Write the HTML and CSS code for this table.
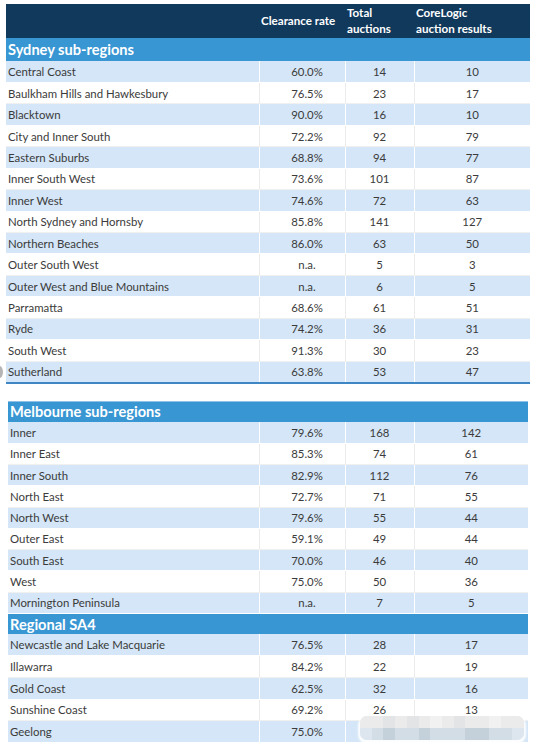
FILE: index.html
```html
<!DOCTYPE html>
<html lang="en">

<head>
    <meta charset="UTF-8">
    <meta name="viewport" content="width=device-width, initial-scale=1.0">
    <title>Auction results by region</title>
    <link rel="stylesheet" href="styles.css">
</head>

<body>
    <div class="page">
        <!-- Sydney table -->
        <table class="results sydney">
            <colgroup>
                <col class="c-region">
                <col class="c-rate">
                <col class="c-total">
                <col class="c-core">
            </colgroup>
            <tr class="head">
                <th></th>
                <th>Clearance rate</th>
                <th>Total<br>auctions</th>
                <th>CoreLogic<br>auction results</th>
            </tr>
            <tr class="section"><td colspan="4">Sydney sub-regions</td></tr>
            <tr><td>Central Coast</td><td>60.0%</td><td>14</td><td>10</td></tr>
            <tr><td>Baulkham Hills and Hawkesbury</td><td>76.5%</td><td>23</td><td>17</td></tr>
            <tr><td>Blacktown</td><td>90.0%</td><td>16</td><td>10</td></tr>
            <tr><td>City and Inner South</td><td>72.2%</td><td>92</td><td>79</td></tr>
            <tr><td>Eastern Suburbs</td><td>68.8%</td><td>94</td><td>77</td></tr>
            <tr><td>Inner South West</td><td>73.6%</td><td>101</td><td>87</td></tr>
            <tr><td>Inner West</td><td>74.6%</td><td>72</td><td>63</td></tr>
            <tr><td>North Sydney and Hornsby</td><td>85.8%</td><td>141</td><td>127</td></tr>
            <tr><td>Northern Beaches</td><td>86.0%</td><td>63</td><td>50</td></tr>
            <tr><td>Outer South West</td><td>n.a.</td><td>5</td><td>3</td></tr>
            <tr><td>Outer West and Blue Mountains</td><td>n.a.</td><td>6</td><td>5</td></tr>
            <tr><td>Parramatta</td><td>68.6%</td><td>61</td><td>51</td></tr>
            <tr><td>Ryde</td><td>74.2%</td><td>36</td><td>31</td></tr>
            <tr><td>South West</td><td>91.3%</td><td>30</td><td>23</td></tr>
            <tr><td>Sutherland</td><td>63.8%</td><td>53</td><td>47</td></tr>
        </table>

        <!-- Melbourne + regional table -->
        <table class="results melbourne">
            <colgroup>
                <col class="c-region">
                <col class="c-rate">
                <col class="c-total">
                <col class="c-core">
            </colgroup>
            <tr class="section"><td colspan="4">Melbourne sub-regions</td></tr>
            <tr class="tint"><td>Inner</td><td>79.6%</td><td>168</td><td>142</td></tr>
            <tr class="plain"><td>Inner East</td><td>85.3%</td><td>74</td><td>61</td></tr>
            <tr class="tint"><td>Inner South</td><td>82.9%</td><td>112</td><td>76</td></tr>
            <tr class="plain"><td>North East</td><td>72.7%</td><td>71</td><td>55</td></tr>
            <tr class="tint"><td>North West</td><td>79.6%</td><td>55</td><td>44</td></tr>
            <tr class="plain"><td>Outer East</td><td>59.1%</td><td>49</td><td>44</td></tr>
            <tr class="tint"><td>South East</td><td>70.0%</td><td>46</td><td>40</td></tr>
            <tr class="plain"><td>West</td><td>75.0%</td><td>50</td><td>36</td></tr>
            <tr class="tint"><td>Mornington Peninsula</td><td>n.a.</td><td>7</td><td>5</td></tr>
            <tr class="section sub"><td colspan="4">Regional SA4</td></tr>
            <tr class="tint regional"><td>Newcastle and Lake Macquarie</td><td>76.5%</td><td>28</td><td>17</td></tr>
            <tr class="plain regional"><td>Illawarra</td><td>84.2%</td><td>22</td><td>19</td></tr>
            <tr class="tint regional"><td>Gold Coast</td><td>62.5%</td><td>32</td><td>16</td></tr>
            <tr class="plain regional"><td>Sunshine Coast</td><td>69.2%</td><td>26</td><td>13</td></tr>
            <tr class="tint regional"><td>Geelong</td><td>75.0%</td><td></td><td></td></tr>
        </table>

        <!-- blurred watermark over the last row -->
        <div class="mosaic">
            <span></span><span></span><span></span><span></span><span></span><span></span><span></span>
            <span></span><span></span><span></span><span></span><span></span><span></span><span></span>
            <span></span><span></span><span></span><span></span><span></span><span></span><span></span>
            <span></span><span></span><span></span><span></span><span></span><span></span><span></span>
        </div>
        <span class="edge-dot"></span>
    </div>
</body>

</html>
```

FILE: styles.css
```css
body {
    margin: 0;
    padding: 0;
    background-color: #fff;
    font-family: Lato, "Liberation Sans", sans-serif;
    color: #3b3b3b;
}

.page {
    position: relative;
    width: 536px;
    height: 748px;
    padding-top: 4px;
    box-sizing: border-box;
}

.results {
    border-collapse: collapse;
    table-layout: fixed;
    font-size: 11.4px;
}

.sydney {
    width: 524px;
    margin-left: 6px;
}

.melbourne {
    width: 520px;
    margin-left: 8px;
    margin-top: 17px;
    border-top: 1px solid #8fc0e6;
}

.sydney .c-region { width: 253px; }
.melbourne .c-region { width: 251px; }
.c-rate { width: 86px; }
.c-total { width: 69px; }

.results td {
    height: 21.45px;
    padding: 0 2px;
    text-align: center;
    border-right: 1px solid #fff;
    border-bottom: 1px solid #fff;
    box-sizing: border-box;
}

.results td:first-child {
    text-align: left;
}

.results td:nth-child(2) {
    padding-left: 12px;
}

.results td:last-child {
    border-right: none;
}

/* sydney stripes: heading rows take the first two slots */
.sydney tr:nth-child(odd) td { background-color: #d4e6f7; }
.sydney tr:nth-child(even) td {
    background-color: #fff;
    border-right-color: #ebebeb;
    border-bottom-color: #f0f0f0;
}

.melbourne tr.tint td { background-color: #d4e6f7; }
.melbourne tr.plain td {
    background-color: #fff;
    border-right-color: #ebebeb;
    border-bottom-color: #f0f0f0;
}

.melbourne tr.tint td,
.melbourne tr.plain td {
    height: 21.25px;
}

.melbourne tr.regional td {
    height: 21.6px;
}

.sydney tr:last-child td {
    border-bottom: 2px solid #3f86c4;
}

.results tr.head th {
    height: 34px;
    padding: 0 2px;
    background-color: #11395c;
    color: #fff;
    font-size: 11.6px;
    font-weight: bold;
    text-align: left;
    line-height: 16px;
}

.results tr.section td {
    height: 23px;
    background-color: #3896d3;
    color: #fff;
    font-size: 14.6px;
    font-weight: bold;
    text-align: left;
    border: none;
    padding-left: 2px;
}

.melbourne tr.section td {
    height: 21px;
}

.mosaic {
    position: absolute;
    left: 360px;
    top: 716px;
    width: 164px;
    height: 24px;
    display: grid;
    grid-template-columns: repeat(14, 1fr);
    border-radius: 7px;
    overflow: hidden;
    box-shadow: 0 2px 2px 2px rgba(255, 255, 255, 0.9);
    background-color: #e4e8ec;
}

.mosaic span:nth-child(-n+14) { background-color: #ebebeb; }
.mosaic span:nth-child(3),
.mosaic span:nth-child(5),
.mosaic span:nth-child(9) { background-color: #e2e4e6; }
.mosaic span:nth-child(7),
.mosaic span:nth-child(12) { background-color: #f1f1f1; }
.mosaic span:nth-child(n+15) { background-color: #d3dde5; }
.mosaic span:nth-child(17),
.mosaic span:nth-child(20),
.mosaic span:nth-child(24),
.mosaic span:nth-child(25) { background-color: #c4d1db; }
.mosaic span:nth-child(15),
.mosaic span:nth-child(28) { background-color: #dde6ee; }

/* scanned edge artefact beside the Sutherland row */
.edge-dot {
    position: absolute;
    left: -4px;
    top: 366px;
    width: 7px;
    height: 12px;
    border-radius: 50%;
    background-color: #b5b5b5;
}
```
